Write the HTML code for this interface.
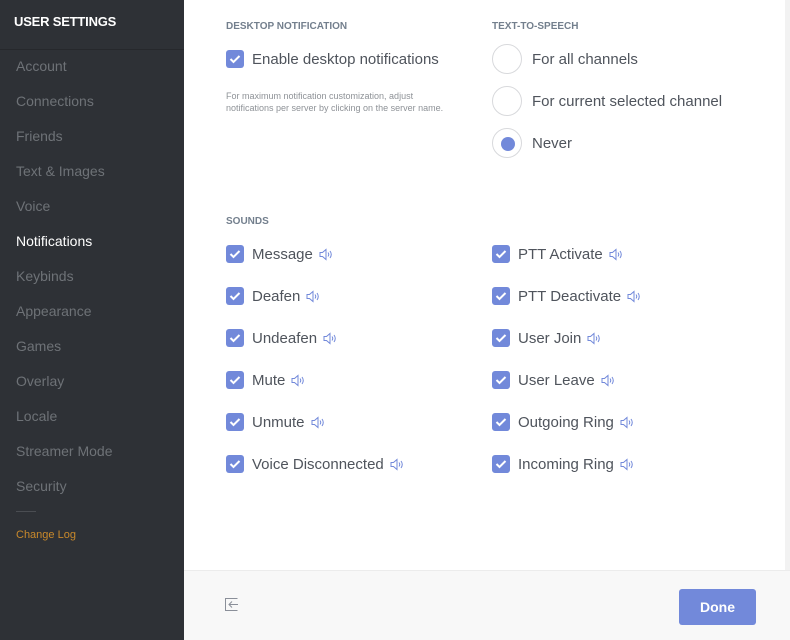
<!DOCTYPE html>
<html><head><style>
*{margin:0;padding:0;box-sizing:border-box}
body{width:790px;height:640px;overflow:hidden;font-family:"Liberation Sans",sans-serif;background:#fff;position:relative}
#side{position:absolute;left:0;top:0;width:184px;height:640px;background:#2e3136}
#side h1{position:absolute;left:14px;top:14px;font-size:13px;font-weight:bold;color:#fff;letter-spacing:-0.2px}
#side .sep{position:absolute;left:0;top:49px;width:184px;height:1px;background:#26282c}
.it{position:absolute;left:16px;font-size:14px;color:#6e7277}
.it.act{color:#fff}
.hd{position:absolute;font-size:10px;font-weight:bold;color:#737f8d}
.cb{position:absolute;width:18px;height:18px;background:#7289da;border-radius:3px}
.cb svg{position:absolute;left:3px;top:4px}
.lb{position:absolute;font-size:15px;color:#4f545c;white-space:nowrap}
.spk{display:inline-block;vertical-align:-2px;margin-left:6px}
.rd{position:absolute;width:30px;height:30px;border:1px solid #d8d9dc;border-radius:50%}
#foot{position:absolute;left:184px;top:570px;width:606px;height:70px;background:#f8f8f8;border-top:1px solid #ececec}
#done{position:absolute;left:495px;top:18px;width:77px;height:36px;background:#7289da;border-radius:3px;color:#fff;font-size:14px;font-weight:bold;text-align:center;line-height:36px}
#sb{position:absolute;left:785px;top:0;width:5px;height:570px;background:#f2f2f2}
</style></head><body>
<div id="side">
<h1>USER SETTINGS</h1><div class="sep"></div>
<div class="it" style="top:58px">Account</div>
<div class="it" style="top:93px">Connections</div>
<div class="it" style="top:128px">Friends</div>
<div class="it" style="top:163px">Text &amp; Images</div>
<div class="it" style="top:198px">Voice</div>
<div class="it act" style="top:233px">Notifications</div>
<div class="it" style="top:268px">Keybinds</div>
<div class="it" style="top:303px">Appearance</div>
<div class="it" style="top:338px">Games</div>
<div class="it" style="top:373px">Overlay</div>
<div class="it" style="top:408px">Locale</div>
<div class="it" style="top:443px">Streamer Mode</div>
<div class="it" style="top:478px">Security</div>
<div style="position:absolute;left:16px;top:511px;width:20px;height:1px;background:#4a4d52"></div>
<div class="it" style="top:529px;font-size:11px;color:#c9892b">Change Log</div>
</div>
<div id="sb"></div>

<div class="hd" style="left:226px;top:21px">DESKTOP NOTIFICATION</div>
<div class="hd" style="left:492px;top:21px">TEXT-TO-SPEECH</div>
<div class="cb" style="left:226px;top:50px"><svg width="12" height="10" viewBox="0 0 12 10"><path d="M1.5 5l3 3 6-6" stroke="#fff" stroke-width="2" fill="none"/></svg></div>
<div class="lb" style="left:252px;top:51px">Enable desktop notifications</div>
<div style="position:absolute;left:226px;top:90px;font-size:9px;color:#8e9297;line-height:12px">For maximum notification customization, adjust<br>notifications per server by clicking on the server name.</div>

<div class="rd" style="left:492px;top:44px"></div><div class="lb" style="left:532px;top:51px">For all channels</div>
<div class="rd" style="left:492px;top:86px"></div><div class="lb" style="left:532px;top:93px">For current selected channel</div>
<div class="rd" style="left:492px;top:128px"><div style="position:absolute;left:8px;top:8px;width:14px;height:14px;border-radius:50%;background:#7289da"></div></div><div class="lb" style="left:532px;top:135px">Never</div>

<div class="hd" style="left:226px;top:216px">SOUNDS</div>
<div id="snd"></div>
<script>
var L=["Message","Deafen","Undeafen","Mute","Unmute","Voice Disconnected"],R=["PTT Activate","PTT Deactivate","User Join","User Leave","Outgoing Ring","Incoming Ring"];
var spk='<svg class="spk" width="15" height="13" viewBox="0 0 15 13"><path d="M1 4.5h2.5L7 1.5v10L3.5 8.5H1z" fill="none" stroke="#7289da" stroke-width="1"/><path d="M9 4.5q1.5 2 0 4M11 3q2.5 3.5 0 7" fill="none" stroke="#7289da" stroke-width="1"/></svg>';
var h="",ck='<svg width="12" height="10" viewBox="0 0 12 10"><path d="M1.5 5l3 3 6-6" stroke="#fff" stroke-width="2" fill="none"/></svg>';
for(var i=0;i<6;i++){var y=245+i*42;
h+='<div class="cb" style="left:226px;top:'+y+'px">'+ck+'</div><div class="lb" style="left:252px;top:'+(y+1)+'px">'+L[i]+spk+'</div>';
h+='<div class="cb" style="left:492px;top:'+y+'px">'+ck+'</div><div class="lb" style="left:518px;top:'+(y+1)+'px">'+R[i]+spk+'</div>';}
document.getElementById("snd").innerHTML=h;
</script>
<div id="foot">
<svg style="position:absolute;left:40px;top:26px" width="16" height="15" viewBox="0 0 16 15"><path d="M13.5 1.5H1.5v12h12M1.5 1.5v12" fill="none" stroke="#8a8f99" stroke-width="1"/><rect x="5" y="3" width="10" height="2" fill="#f8f8f8"/><rect x="5" y="10" width="10" height="2" fill="#f8f8f8"/><path d="M14 7.5H5M8 4.5l-3 3 3 3" fill="none" stroke="#8a8f99" stroke-width="1"/></svg>
<div id="done">Done</div>
</div>
</body></html>
